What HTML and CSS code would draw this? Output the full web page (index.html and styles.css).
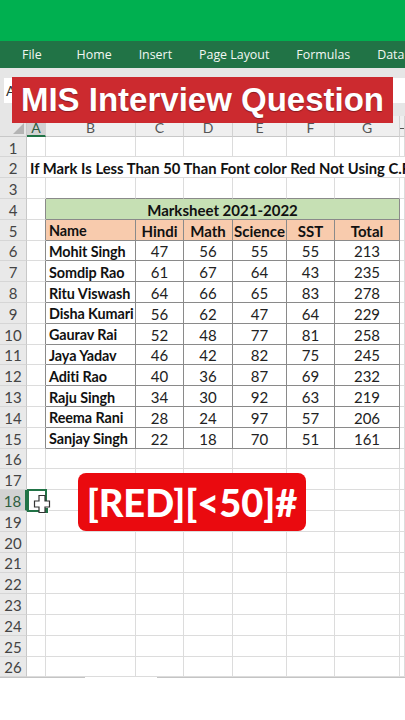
FILE: index.html
```html
<!DOCTYPE html>
<html>
<head>
<meta charset="utf-8">
<link rel="stylesheet" href="styles.css">
</head>
<body>
<div class="app">
  <div class="titlebar"></div>
  <nav class="ribbon">
    <span class="tab file">File</span>
    <span class="tab">Home</span>
    <span class="tab">Insert</span>
    <span class="tab">Page Layout</span>
    <span class="tab">Formulas</span>
    <span class="tab">Data</span>
  </nav>
  <div class="formula">
    <div class="namebox">A18</div>
    <div class="fxbar"></div>
  </div>
  <div class="grid">
    <div class="corner"><span class="tri"></span></div>
    <div class="ch sel">A</div><div class="ch">B</div><div class="ch">C</div><div class="ch">D</div><div class="ch">E</div><div class="ch">F</div><div class="ch">G</div><div class="ch">H</div>

    <div class="rh">1</div><div class="c"></div><div class="c"></div><div class="c"></div><div class="c"></div><div class="c"></div><div class="c"></div><div class="c"></div><div class="c"></div>

    <div class="rh">2</div><div class="c note">If Mark Is Less Than 50 Than Font color Red Not Using C.F</div>

    <div class="rh">3</div><div class="c"></div><div class="c tt"></div><div class="c tt"></div><div class="c tt"></div><div class="c tt"></div><div class="c tt"></div><div class="c tt"></div><div class="c"></div>

    <div class="rh">4</div><div class="c tl"></div><div class="t title">Marksheet 2021-2022</div><div class="c"></div>

    <div class="rh">5</div><div class="c tl"></div><div class="t hd name">Name</div><div class="t hd">Hindi</div><div class="t hd">Math</div><div class="t hd">Science</div><div class="t hd">SST</div><div class="t hd">Total</div><div class="c"></div>

    <div class="rh">6</div><div class="c tl"></div><div class="t name">Mohit Singh</div><div class="t">47</div><div class="t">56</div><div class="t">55</div><div class="t">55</div><div class="t">213</div><div class="c"></div>
    <div class="rh">7</div><div class="c tl"></div><div class="t name">Somdip Rao</div><div class="t">61</div><div class="t">67</div><div class="t">64</div><div class="t">43</div><div class="t">235</div><div class="c"></div>
    <div class="rh">8</div><div class="c tl"></div><div class="t name">Ritu Viswash</div><div class="t">64</div><div class="t">66</div><div class="t">65</div><div class="t">83</div><div class="t">278</div><div class="c"></div>
    <div class="rh">9</div><div class="c tl"></div><div class="t name">Disha Kumari</div><div class="t">56</div><div class="t">62</div><div class="t">47</div><div class="t">64</div><div class="t">229</div><div class="c"></div>
    <div class="rh">10</div><div class="c tl"></div><div class="t name">Gaurav Rai</div><div class="t">52</div><div class="t">48</div><div class="t">77</div><div class="t">81</div><div class="t">258</div><div class="c"></div>
    <div class="rh">11</div><div class="c tl"></div><div class="t name">Jaya Yadav</div><div class="t">46</div><div class="t">42</div><div class="t">82</div><div class="t">75</div><div class="t">245</div><div class="c"></div>
    <div class="rh">12</div><div class="c tl"></div><div class="t name">Aditi Rao</div><div class="t">40</div><div class="t">36</div><div class="t">87</div><div class="t">69</div><div class="t">232</div><div class="c"></div>
    <div class="rh">13</div><div class="c tl"></div><div class="t name">Raju Singh</div><div class="t">34</div><div class="t">30</div><div class="t">92</div><div class="t">63</div><div class="t">219</div><div class="c"></div>
    <div class="rh">14</div><div class="c tl"></div><div class="t name">Reema Rani</div><div class="t">28</div><div class="t">24</div><div class="t">97</div><div class="t">57</div><div class="t">206</div><div class="c"></div>
    <div class="rh">15</div><div class="c tl"></div><div class="t name">Sanjay Singh</div><div class="t">22</div><div class="t">18</div><div class="t">70</div><div class="t">51</div><div class="t">161</div><div class="c"></div>

    <div class="rh">16</div><div class="c"></div><div class="c"></div><div class="c"></div><div class="c"></div><div class="c"></div><div class="c"></div><div class="c"></div><div class="c"></div>
    <div class="rh">17</div><div class="c"></div><div class="c"></div><div class="c"></div><div class="c"></div><div class="c"></div><div class="c"></div><div class="c"></div><div class="c"></div>
    <div class="rh sel">18</div><div class="c"></div><div class="c"></div><div class="c"></div><div class="c"></div><div class="c"></div><div class="c"></div><div class="c"></div><div class="c"></div>
    <div class="rh">19</div><div class="c"></div><div class="c"></div><div class="c"></div><div class="c"></div><div class="c"></div><div class="c"></div><div class="c"></div><div class="c"></div>
    <div class="rh">20</div><div class="c"></div><div class="c"></div><div class="c"></div><div class="c"></div><div class="c"></div><div class="c"></div><div class="c"></div><div class="c"></div>
    <div class="rh">21</div><div class="c"></div><div class="c"></div><div class="c"></div><div class="c"></div><div class="c"></div><div class="c"></div><div class="c"></div><div class="c"></div>
    <div class="rh">22</div><div class="c"></div><div class="c"></div><div class="c"></div><div class="c"></div><div class="c"></div><div class="c"></div><div class="c"></div><div class="c"></div>
    <div class="rh">23</div><div class="c"></div><div class="c"></div><div class="c"></div><div class="c"></div><div class="c"></div><div class="c"></div><div class="c"></div><div class="c"></div>
    <div class="rh">24</div><div class="c"></div><div class="c"></div><div class="c"></div><div class="c"></div><div class="c"></div><div class="c"></div><div class="c"></div><div class="c"></div>
    <div class="rh">25</div><div class="c"></div><div class="c"></div><div class="c"></div><div class="c"></div><div class="c"></div><div class="c"></div><div class="c"></div><div class="c"></div>
    <div class="rh">26</div><div class="c"></div><div class="c"></div><div class="c"></div><div class="c"></div><div class="c"></div><div class="c"></div><div class="c"></div><div class="c"></div>
  </div>
  <div class="footer"><span class="seg first"></span><span class="seg rest"></span></div>

  <div class="banner">MIS Interview Question</div>
  <div class="badge">[RED][&lt;50]#</div>
  <div class="selbox"><span class="handle"></span></div>
  <svg class="cursor" width="18" height="20" viewBox="0 0 18 20">
    <path d="M6 1.5 H12 V7 H16.5 V13 H12 V18.5 H6 V13 H1.5 V7 H6 Z" fill="#fff" stroke="#333" stroke-width="1.2" stroke-linejoin="miter"/>
  </svg>
</div>
</body>
</html>
```
FILE: styles.css
```css
body {
  margin: 0;
}
.app {
  position: relative;
  width: 405px;
  height: 720px;
  overflow: hidden;
  background: #fff;
  font-family: Lato, "Open Sans", sans-serif;
  color: #1a1a1a;
}
.titlebar {
  height: 41px;
  background: #00b050;
}
.ribbon {
  height: 27px;
  background: #217346;
  display: flex;
  align-items: center;
  gap: 27px;
  padding-left: 22px;
  color: #f2f7f3;
  font-family: "Open Sans", sans-serif;
  font-size: 12.4px;
  white-space: nowrap;
  box-sizing: border-box;
}
.tab.file {
  margin-right: 8px;
}
.formula {
  height: 48px;
  background: #e6e6e6;
  display: flex;
  gap: 70px;
  padding: 10px 0 0 4px;
  box-sizing: border-box;
}
.namebox {
  width: 75px;
  height: 25px;
  background: #fff;
  font-size: 14px;
  line-height: 25px;
  padding-left: 2px;
  box-sizing: border-box;
  color: #333;
}
.fxbar {
  flex: 1;
  height: 25px;
  background: #fff;
}
.grid {
  display: grid;
  grid-template-columns: 27px 19px 90px 48px 49px 54px 48px 65px 1fr;
  grid-template-rows: 20.6px repeat(26, 20.8px);
}
.grid > div {
  box-sizing: border-box;
  display: flex;
  align-items: center;
  overflow: hidden;
  white-space: nowrap;
}
.corner {
  background: #e6e6e6;
  border-right: 1px solid #c8c8c8;
  border-bottom: 1px solid #c8c8c8;
  position: relative;
}
.tri {
  position: absolute;
  right: 2px;
  bottom: 2px;
  width: 0;
  height: 0;
  border-left: 11px solid transparent;
  border-bottom: 11px solid #b4b4b4;
}
.ch {
  background: #efefef;
  border-right: 1px solid #d2d2d2;
  border-bottom: 1px solid #c8c8c8;
  justify-content: center;
  color: #555;
  font-size: 14px;
  padding-top: 4px;
}
.ch.sel {
  background: #d2d2d2;
  border-bottom: 2px solid #217346;
  color: #2e5e40;
}
.rh {
  background: #e9e9e9;
  border-right: 1px solid #c8c8c8;
  border-bottom: 1px solid #d6d6d6;
  justify-content: center;
  color: #444;
  font-size: 15px;
  padding-top: 2px;
}
.rh.sel {
  background: #d2d2d2;
  border-right: 2px solid #217346;
  color: #2e5e40;
}
.c {
  border-right: 1px solid #dcdcdc;
  border-bottom: 1px solid #dcdcdc;
}
.c.tt {
  border-bottom-color: #8a8a8a;
}
.c.tl {
  border-right-color: #8a8a8a;
}
.note {
  grid-column: span 8;
  border-right: none;
  font-size: 14.8px;
  font-weight: 700;
  padding-left: 3px;
  padding-top: 2px;
  color: #111;
}
.t {
  border-right: 1px solid #8a8a8a;
  border-bottom: 1px solid #8a8a8a;
  justify-content: center;
  font-size: 15px;
  padding-top: 2px;
  color: #222;
}
.t.name {
  justify-content: flex-start;
  padding-left: 3px;
  font-weight: 700;
  font-size: 14.4px;
  letter-spacing: -0.1px;
  color: #111;
}
.t.hd {
  background: #f8cbad;
  font-weight: 700;
  color: #111;
}
.t.title {
  grid-column: span 6;
  background: #c6e0b4;
  font-weight: 700;
  color: #111;
}
.footer {
  display: flex;
  gap: 72px;
}
.seg {
  border-top: 1px solid #c4c4c4;
  height: 0;
}
.seg.first {
  width: 85px;
}
.seg.rest {
  flex: 1;
}
.banner {
  position: absolute;
  left: 12px;
  top: 77px;
  width: 381px;
  height: 46px;
  background: #cc2a2f;
  color: #fff;
  font-family: "Liberation Sans", Arial, sans-serif;
  font-weight: 700;
  font-size: 33px;
  line-height: 46px;
  text-align: center;
  white-space: nowrap;
  text-shadow: 0 1px 1px rgba(0,0,0,0.35);
}
.badge {
  position: absolute;
  left: 78px;
  top: 473px;
  width: 228px;
  height: 58px;
  border-radius: 8px;
  background: #ea0a0f;
  color: #fff;
  font-family: Lato, sans-serif;
  font-weight: 900;
  font-size: 38px;
  line-height: 58px;
  text-align: center;
  white-space: nowrap;
}
.selbox {
  position: absolute;
  left: 27px;
  top: 489px;
  width: 20px;
  height: 23px;
  border: 2px solid #217346;
  box-sizing: border-box;
}
.handle {
  position: absolute;
  right: -4px;
  bottom: -4px;
  width: 5px;
  height: 5px;
  background: #217346;
  border: 1px solid #fff;
}
.cursor {
  position: absolute;
  left: 33px;
  top: 494px;
}
```
